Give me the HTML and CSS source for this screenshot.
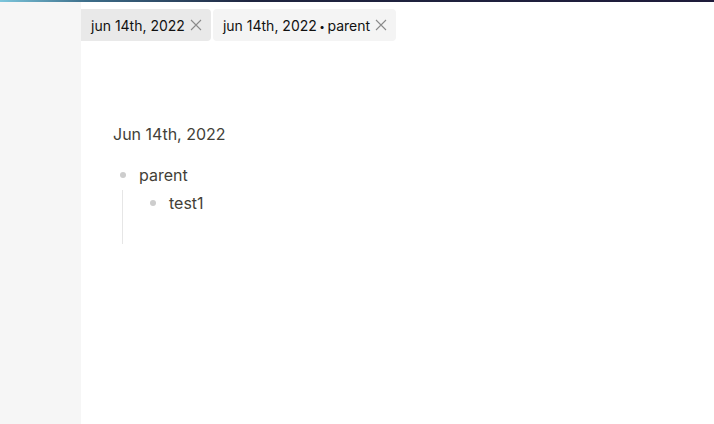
FILE: index.html
```html
<!DOCTYPE html>
<html>
<head>
<meta charset="utf-8">
<link rel="stylesheet" href="styles.css">
</head>
<body>
<div class="topline"></div>
<div class="app">
  <aside class="sidebar"></aside>
  <main class="main">
    <div class="tabs">
      <div class="tab tab-active">
        <span class="tab-label">jun 14th, 2022</span>
        <svg class="close" width="12" height="12" viewBox="0 0 12 12"><path d="M1 1L11 11M11 1L1 11" stroke="#8a8a8a" stroke-width="1.1" fill="none"/></svg>
      </div>
      <div class="tab">
        <span class="tab-label">jun 14th, 2022<span class="dot">•</span>parent</span>
        <svg class="close" width="12" height="12" viewBox="0 0 12 12"><path d="M1 1L11 11M11 1L1 11" stroke="#8a8a8a" stroke-width="1.1" fill="none"/></svg>
      </div>
    </div>
    <div class="page">
      <h1 class="title">Jun 14th, 2022</h1>
      <div class="block">
        <div class="row">
          <span class="bullet"></span><span class="text">parent</span>
        </div>
        <div class="children">
          <div class="block">
            <div class="row">
              <span class="bullet"></span><span class="text">test1</span>
            </div>
          </div>
        </div>
      </div>
    </div>
  </main>
</div>
</body>
</html>
```
FILE: styles.css
```css
html, body {
  margin: 0;
  padding: 0;
  height: 100%;
  background: #ffffff;
  font-family: Inter, "Noto Sans", sans-serif;
}
.topline {
  height: 2px;
  background: linear-gradient(to right, #7cc6dc 0%, #3d6e8a 12%, #1f2540 35%, #1e1b3a 100%);
}
.app {
  display: flex;
  height: calc(100% - 2px);
}
.sidebar {
  width: 81px;
  flex: none;
  background: #f6f6f6;
}
.main {
  flex: 1;
  display: flex;
  flex-direction: column;
}
.tabs {
  display: flex;
  gap: 2px;
  padding-top: 7px;
}
.tab {
  display: flex;
  align-items: center;
  gap: 5px;
  height: 32px;
  padding: 0 9px 0 10px;
  box-sizing: border-box;
  background: #f4f4f4;
  border-radius: 4px;
  color: #111;
  font-size: 14px;
}
.tab-active {
  background: #e9e9e9;
  border-radius: 0 4px 4px 0;
}
.dot {
  font-size: 10px;
  margin: 0 2.5px;
  position: relative;
  top: -1px;
}
.close {
  display: block;
}
.page {
  padding: 82px 0 0 32px;
}
.title {
  margin: 0;
  font-size: 16px;
  font-weight: 400;
  color: #433f38;
  line-height: 22px;
}
.page > .block {
  margin-top: 17px;
  margin-left: 3px;
}
.row {
  display: flex;
  align-items: center;
  height: 26px;
}
.bullet {
  width: 6px;
  height: 6px;
  border-radius: 50%;
  background: #cdcdcd;
  margin: 0 13px 0 4px;
  flex: none;
}
.text {
  font-size: 16px;
  color: #433f38;
}
.children {
  margin-left: 6px;
  border-left: 1px solid #e6e6e6;
  padding-left: 23px;
  padding-bottom: 28px;
  margin-top: 3px;
}
.children .row {
  margin-top: -1px;
}
```
